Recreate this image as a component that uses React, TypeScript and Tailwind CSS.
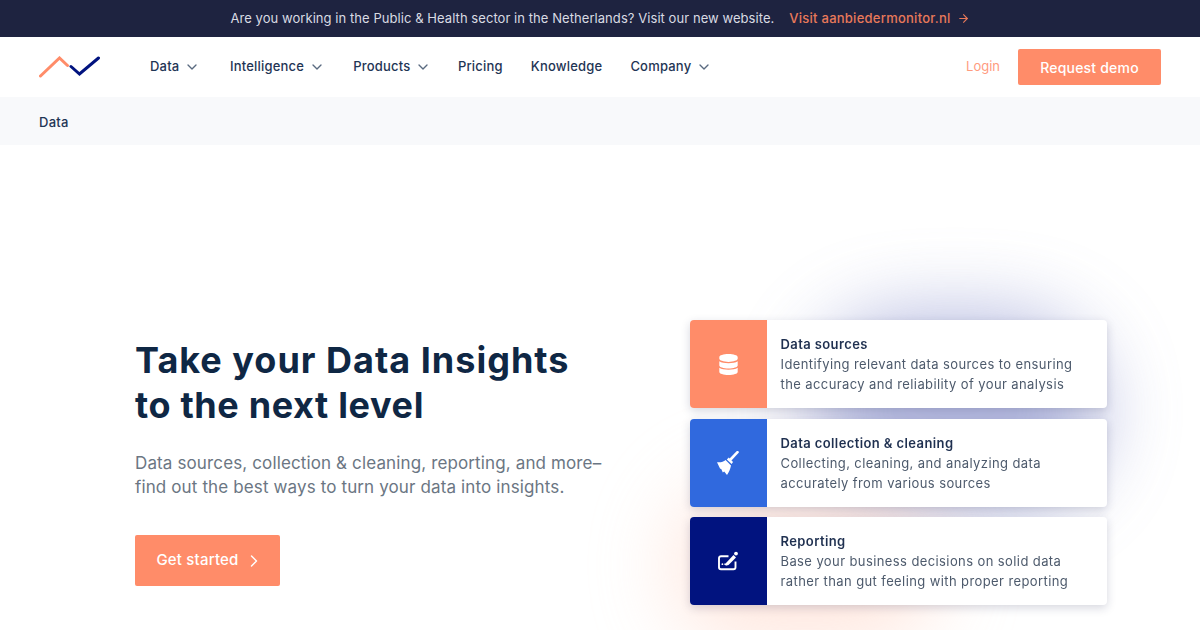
import { ChevronDown, ChevronRight, ArrowRight } from "lucide-react";
import { FaDatabase } from "react-icons/fa";

const navItems = [
  { label: "Data", caret: true, gap: "mr-[28.5px]" },
  { label: "Intelligence", caret: true, gap: "mr-[27px]" },
  { label: "Products", caret: true, gap: "mr-[25.5px]" },
  { label: "Pricing", caret: false, gap: "mr-[28px]" },
  { label: "Knowledge", caret: false, gap: "mr-[28px]" },
  { label: "Company", caret: true, gap: "" },
];

function Logo() {
  return (
    <svg width="62" height="22" viewBox="0 0 62 22" fill="none" className="block">
      <path d="M1.5 20 L20.5 2 L28.5 9.5" stroke="#ff8c69" strokeWidth="3" strokeLinecap="round" strokeLinejoin="miter" />
      <path d="M32 10.5 L40.5 18 L59.5 2" stroke="#01137f" strokeWidth="3" strokeLinecap="round" strokeLinejoin="miter" />
    </svg>
  );
}

function BroomIcon() {
  return (
    <svg width="22" height="24" viewBox="0 0 22 24" fill="none" className="block">
      <path d="M20.5 1.2 L14 8" stroke="white" strokeWidth="2.6" strokeLinecap="round" />
      <path d="M11.8 6.6 L16 11 L14.6 13 L9.8 8.4 Z" fill="white" />
      <path d="M8.6 9 L14 14.4 C13.4 17.8 12 21 10 24 L7.2 20.6 L5.8 21.6 L4.4 18.2 L3 17.6 L0 11.2 C3.4 11.6 6.4 11 8.6 9 Z" fill="white" />
    </svg>
  );
}

function ReportIcon() {
  return (
    <svg width="20" height="20" viewBox="0 0 20 20" fill="none" className="block">
      <path d="M10.5 5.2H3a2 2 0 0 0-2 2v9a2 2 0 0 0 2 2h12.5a2 2 0 0 0 2-2V10.5" stroke="white" strokeWidth="1.9" />
      <path d="M8 12 L15.5 4 L18 6.5 L10.5 14 L7.6 14.8 Z" fill="white" />
      <circle cx="18" cy="2.6" r="1.9" fill="white" />
      <circle cx="4.4" cy="13.2" r="0.9" fill="white" />
      <circle cx="7.2" cy="13.2" r="0.9" fill="white" />
    </svg>
  );
}

const cards = [
  {
    title: "Data sources",
    lines: ["Identifying relevant data sources to ensuring", "the accuracy and reliability of your analysis"],
    color: "bg-[#ff8c69]",
    icon: <FaDatabase size={21} color="#fff" />,
  },
  {
    title: "Data collection & cleaning",
    lines: ["Collecting, cleaning, and analyzing data", "accurately from various sources"],
    color: "bg-[#3069de]",
    icon: <BroomIcon />,
  },
  {
    title: "Reporting",
    lines: ["Base your business decisions on solid data", "rather than gut feeling with proper reporting"],
    color: "bg-[#01137f]",
    icon: <ReportIcon />,
  },
];

export default function App() {
  return (
    <div className="relative h-[630px] w-[1200px] overflow-hidden bg-white font-['Inter','Liberation_Sans',sans-serif]">
      <div className="flex h-[37px] items-center justify-center bg-[#1e2340] text-[13px] tracking-[0.06px] text-[#d9dbe3]">
        <span>Are you working in the Public &amp; Health sector in the Netherlands? Visit our new website.</span>
        <span className="ml-[15px] flex items-center font-medium tracking-[0.25px] text-[#e8795a]">
          Visit aanbiedermonitor.nl
          <ArrowRight size={13} strokeWidth={2} className="ml-[6px]" />
        </span>
      </div>

      <nav className="flex h-[60px] items-center bg-white pl-[39px] pr-[39px]">
        <Logo />
        <div className="ml-[49px] flex items-center text-[13px] font-medium tracking-[0.2px] text-[#1f3555]">
          {navItems.map((n) => (
            <div key={n.label} className={`flex items-center ${n.gap}`}>
              <span>{n.label}</span>
              {n.caret && <ChevronDown size={16} strokeWidth={2} className="ml-[5px] mr-[1px] text-[#5a6a80]" />}
            </div>
          ))}
        </div>
        <div className="ml-auto flex items-center">
          <span className="text-[13px] text-[#ff9c7f]">Login</span>
          <span className="ml-[18px] flex h-[36px] w-[143px] items-center justify-center rounded-[2px] bg-[#ff8c69] text-[14px] font-medium tracking-[0.2px] text-white">
            Request demo
          </span>
        </div>
      </nav>

      <div className="flex h-[48px] items-center bg-[#f8f9fb] pl-[39px] pt-[3px] text-[13px] font-medium tracking-[0.25px] text-[#1f3555]">Data</div>

      <main className="relative flex items-start">
        <div className="pointer-events-none absolute left-[810px] top-[170px] h-[190px] w-[290px] rounded-full bg-[#959cd2] opacity-70 blur-[40px]" />
        <div className="pointer-events-none absolute left-[670px] top-[335px] h-[170px] w-[270px] rounded-full bg-[#ffd9cb] opacity-60 blur-[40px]" />

        <div className="relative ml-[135px] mt-[193px] w-[555px]">
          <h1 className="text-[36px] font-bold leading-[45px] text-[#0f2744]">
            <span className="tracking-[1px]">Take your Data Insights</span>
            <br />
            <span className="tracking-[0.65px]">to the next level</span>
          </h1>
          <p className="mt-[23px] text-[17px] leading-[24px] tracking-[0.13px] text-[#6b7683]">
            Data sources, collection &amp; cleaning, reporting, and more–
            <br />
            find out the best ways to turn your data into insights.
          </p>
          <div className="mt-[36px] flex h-[51px] w-[145px] items-center justify-center rounded-[2px] bg-[#ff8c69] pl-[5px] text-[15px] font-medium tracking-[0.2px] text-white">
            Get started
            <ChevronRight size={20} strokeWidth={1.7} className="ml-[5px]" />
          </div>
        </div>

        <div className="relative mt-[175px] flex w-[417px] flex-col gap-[10.5px]">
          {cards.map((c) => (
            <div key={c.title} className="flex h-[88px] overflow-hidden rounded-[4px] bg-white shadow-[0_3px_10px_rgba(30,35,80,0.18)]">
              <div className={`flex w-[76.5px] shrink-0 items-center justify-center ${c.color}`}>{c.icon}</div>
              <div className="flex flex-col justify-center pl-[14px] text-[13px] leading-[20px] tracking-[0.4px] blur-[0.25px]">
                <div className="font-semibold text-[#1f3050]">{c.title}</div>
                {c.lines.map((l) => (
                  <div key={l} className="text-[#4d5a6c]">{l}</div>
                ))}
              </div>
            </div>
          ))}
        </div>
      </main>
    </div>
  );
}
